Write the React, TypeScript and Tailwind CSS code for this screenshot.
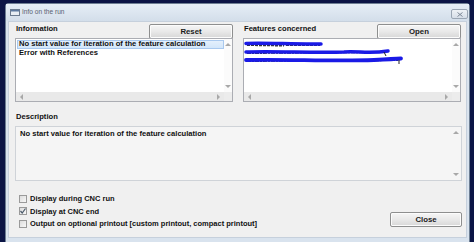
import React from "react";

const font = { fontFamily: '"Liberation Sans", Arial, sans-serif' };

function Arrow({ dir }: { dir: "up" | "down" | "left" | "right" }) {
  const pts: Record<string, string> = {
    up: "0,4 3,1 6,4",
    down: "0,1 3,4 6,1",
    left: "4,0 1,3 4,6",
    right: "1,0 4,3 1,6",
  };
  const w = dir === "up" || dir === "down" ? 6 : 5;
  const h = dir === "up" || dir === "down" ? 5 : 6;
  return (
    <svg width={w} height={h} viewBox={`0 0 ${w} ${h}`}>
      <polygon points={pts[dir]} fill="#a8a8a8" />
    </svg>
  );
}

function Btn({ label, w }: { label: string; w: string }) {
  return (
    <div
      className={`${w} h-[15px] flex items-center justify-center rounded-[2px] border border-[#8e8f8f] bg-gradient-to-b from-[#f6f6f6] via-[#e9e9e9] to-[#d7d7d7] text-[7.8px] font-bold text-[#1a1a1a] shadow-[inset_0_0_0_1px_#fcfcfc]`}
    >
      {label}
    </div>
  );
}

function ListBox({ children }: { children: React.ReactNode }) {
  return (
    <div className="h-[64px] border border-[#abadb3] bg-white flex flex-col">
      <div className="flex flex-1 min-h-0">
        <div className="flex-1 min-w-0 overflow-hidden">{children}</div>
        <div className="w-[8px] flex flex-col items-center justify-between py-[3px] bg-[#fbfbfb]">
          <Arrow dir="up" />
          <Arrow dir="down" />
        </div>
      </div>
      <div className="h-[9px] flex">
        <div className="flex-1 flex items-center justify-between px-[3px] bg-[#e9e9e9]">
          <Arrow dir="left" />
          <Arrow dir="right" />
        </div>
        <div className="w-[8px] bg-[#ececec]" />
      </div>
    </div>
  );
}

function Check({ checked, label }: { checked?: boolean; label: string }) {
  return (
    <div className="flex items-center h-[12.5px] gap-[3px]">
      <div className="w-[8px] h-[8px] border border-[#9a9a9a] bg-gradient-to-br from-[#dcdcdc] to-[#f8f8f8] flex items-center justify-center">
        {checked && (
          <svg width="6" height="6" viewBox="0 0 6 6">
            <polyline points="0.5,3 2.2,5 5.5,0.5" fill="none" stroke="#4a5a6a" strokeWidth="1.2" />
          </svg>
        )}
      </div>
      <span className="text-[7.5px] font-bold text-[#111] leading-none">{label}</span>
    </div>
  );
}

export default function App() {
  return (
    <div
      className="w-[474px] h-[242px] overflow-hidden bg-[#0b1445] flex pl-[5px] pt-[3px] pr-[4px]"
      style={font}
    >
      <div className="flex-1 flex flex-col bg-[#d9e3ee] border-l border-t border-r border-[#6d7e93] rounded-tl-[4px] rounded-tr-[4px] px-[2px]">
        {/* title bar */}
        <div className="h-[17px] flex items-center bg-gradient-to-b from-[#e6eef6] to-[#d3deea] -mx-[2px] px-[4px]">
          <svg width="10" height="7" viewBox="0 0 10 7" className="mr-[2px]">
            <rect x="0.5" y="0.5" width="9" height="6" fill="#e8eef4" stroke="#6c7c90" />
            <rect x="1" y="1" width="8" height="1.5" fill="#5d7aa0" />
          </svg>
          <span className="text-[6.6px] text-[#5a6270] leading-none">Info on the run</span>
          <div className="flex-1" />
          <div className="w-[17px] h-[10px] -mr-[3px] mt-[3px] rounded-[2px] border border-[#9aa6b4] bg-gradient-to-b from-[#eef2f6] to-[#d6dee8] flex items-center justify-center">
            <svg width="6" height="5" viewBox="0 0 6 5">
              <path d="M0.5 0.5 L5.5 4.5 M5.5 0.5 L0.5 4.5" stroke="#7c8796" strokeWidth="1" />
            </svg>
          </div>
        </div>

        {/* client */}
        <div className="flex-1 bg-[#f0f0f0] flex flex-col pl-[6px] pr-[3px] pt-[2px] pb-[3px] border border-[#c6d0dc]">
          <div className="flex gap-[10px]">
            {/* Information */}
            <div className="w-[218px] flex flex-col">
              <div className="h-[14px] flex items-start justify-between">
                <span className="text-[7.6px] font-bold text-[#111] leading-none mt-[1px] pl-[1px]">Information</span>
                <Btn label="Reset" w="w-[84px]" />
              </div>
              <ListBox>
                <div className="pl-[1px] pt-[1px] text-[7.6px] font-bold text-[#111] leading-[8px]">
                  <div className="h-[8.5px] bg-gradient-to-b from-[#e4f0fc] to-[#d3e6fa] border border-[#a9c9ef] pl-[1px] flex items-center whitespace-nowrap">
                    No start value for iteration of the feature calculation
                  </div>
                  <div className="h-[8.5px] pl-[2px] flex items-center whitespace-nowrap">Error with References</div>
                </div>
              </ListBox>
            </div>
            {/* Features */}
            <div className="w-[218px] flex flex-col">
              <div className="h-[14px] flex items-start justify-between">
                <span className="text-[7.6px] font-bold text-[#111] leading-none mt-[1px] pl-[1px]">Features concerned</span>
                <Btn label="Open" w="w-[84px]" />
              </div>
              <ListBox>
                <svg width="205" height="30" viewBox="0 0 205 30">
                  <path d="M3 6 L40 6.5 M42 6 L76 6" stroke="#333" strokeWidth="2" strokeDasharray="3 1" />
                  <path d="M2 4.5 C20 3.5 50 5.5 77 5" stroke="#1a1ae6" strokeWidth="3.5" fill="none" strokeLinecap="round" />
                  <path d="M3 14 L140 13" stroke="#333" strokeWidth="2" strokeDasharray="4 1 2 1" />
                  <path d="M2 13 C30 12 70 14 100 13 C115 12 125 15 144 12" stroke="#1a1ae6" strokeWidth="3.5" fill="none" strokeLinecap="round" />
                  <path d="M140 13 L142 17" stroke="#222" strokeWidth="1" />
                  <path d="M3 22 L155 21" stroke="#333" strokeWidth="2" strokeDasharray="4 1 2 1" />
                  <path d="M2 21 C40 20 90 22.5 130 21 C140 20.5 150 20 157 19.5" stroke="#1a1ae6" strokeWidth="3.8" fill="none" strokeLinecap="round" />
                  <path d="M155 21 L155 25" stroke="#222" strokeWidth="1" />
                </svg>
              </ListBox>
            </div>
          </div>

          <div className="mt-[11px] text-[7.6px] font-bold text-[#111] leading-none pl-[1px]">Description</div>
          <div className="mt-[5px] w-[447px] h-[55px] border border-[#cfd3d8] bg-[#f5f5f5] flex">
            <div className="flex-1 pl-[4px] pt-[3px] text-[7.6px] font-bold text-[#111] leading-none">
              No start value for iteration of the feature calculation
            </div>
            <div className="w-[10px] flex flex-col items-center justify-between py-[3px]">
              <Arrow dir="up" />
              <Arrow dir="down" />
            </div>
          </div>

          <div className="flex mt-[12px] w-[447px]">
            <div className="flex-1 flex flex-col pl-[4px]">
              <Check label="Display during CNC run" />
              <Check checked label="Display at CNC end" />
              <Check label="Output on optional printout [custom printout, compact printout]" />
            </div>
            <div className="flex items-end pb-[3px]">
              <Btn label="Close" w="w-[72px]" />
            </div>
          </div>
        </div>
        <div className="h-[4px]" />
      </div>
    </div>
  );
}
